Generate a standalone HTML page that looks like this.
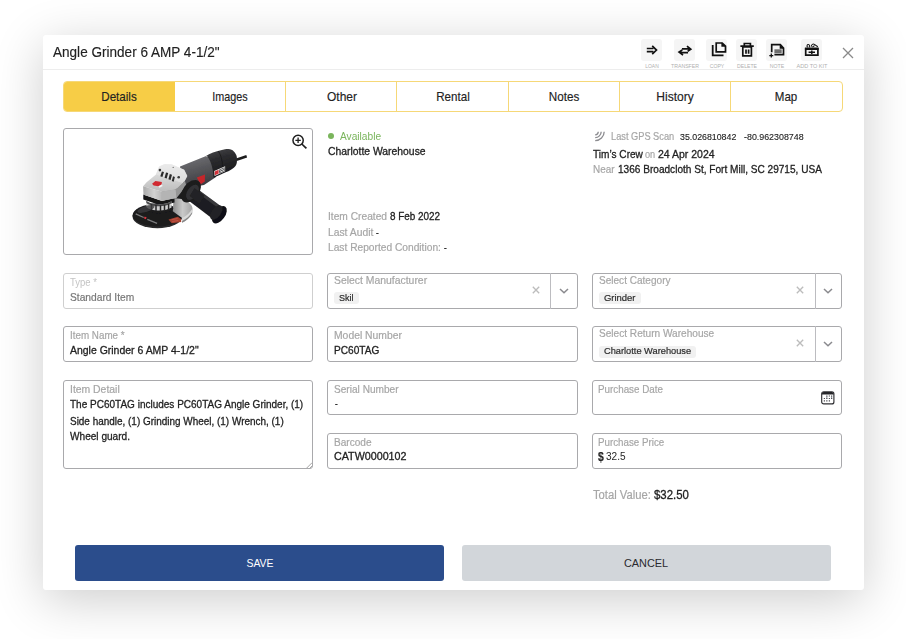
<!DOCTYPE html>
<html lang="en"><head><meta charset="utf-8"><title>Angle Grinder 6 AMP 4-1/2"</title>
<style>
html,body{margin:0;padding:0;}
body{width:906px;height:639px;background:#fff;position:relative;overflow:hidden;font-family:"Liberation Sans",sans-serif;}
.abs,.t,.box,.chip,.ib{position:absolute;box-sizing:border-box;}
.t{white-space:nowrap;line-height:1;}
#modal{left:42.700px;top:35.200px;width:821.300px;height:554.800px;background:#fff;border-radius:3px;box-shadow:0 10px 50px rgba(0,0,0,.2);}
#hline{left:43px;top:68.500px;width:821px;height:1.600px;background:#ededed;}
.ib{width:21px;height:21.5px;top:39px;background:#f5f5f5;border-radius:3px;}
.ib svg{position:absolute;left:0;top:0;}
#tabs{left:63.300px;top:80.700px;width:779.700px;height:31px;border:1px solid #f6d877;border-radius:4px;background:#fff;overflow:hidden;}
.tdiv{top:81px;width:1px;height:30px;background:#f6d877;}
#tabact{left:-1px;top:-1px;width:111.500px;height:31px;background:#f7cd46;}
.box{border:1px solid #a9a9ac;border-radius:3px;background:#fff;}
.box.dis{border-color:#cfcfcf;}
.vdiv{width:1.200px;background:#bcbcc0;}
.chip{height:12px;background:#f1f1f1;border-radius:3px;}
.btn{border-radius:3px;height:36px;top:545px;}

</style></head>
<body>
<div id="modal" class="abs"></div>
<div id="hline" class="abs"></div>

<!-- toolbar -->
<div class="ib" style="left:641px"><svg width="22" height="22" viewBox="0 0 22 22"><path d="M5.800 9.500h6.600M5.800 12.600h6.600M11.200 6.900l4.300 4.150-4.300 4.150" fill="none" stroke="#111" stroke-width="1.700"/></svg></div>
<div class="ib" style="left:674px"><svg width="22" height="22" viewBox="0 0 22 22"><g transform="translate(11 11.600) scale(.9) translate(-11 -11.600)"><path d="M7.600 9.700h8.200M13.200 6.700l4.200 3.400-3.400 2.200M14.400 13.900H6.200M8.800 16.600l-4.400-3.300 3.600-2.400" fill="none" stroke="#111" stroke-width="1.900" stroke-linejoin="miter"/></g></svg></div>
<div class="ib" style="left:706px"><svg width="22" height="22" viewBox="0 0 22 22"><path d="M10.200 4h6l3.300 3.200v5.600h-9.300z" fill="none" stroke="#111" stroke-width="1.700"/><path d="M15.400 3.600v4.200h4.400z" fill="#111"/><path d="M6.700 6v10.300h10.800" fill="none" stroke="#111" stroke-width="1.800"/></svg></div>
<div class="ib" style="left:736px"><svg width="22" height="22" viewBox="0 0 22 22"><path d="M4.400 7.200h13.400M8.300 6.800V4.500h6.100v2.300" fill="none" stroke="#111" stroke-width="1.700"/><path d="M6.800 8h8.600v8.800H6.800z" fill="none" stroke="#111" stroke-width="1.700"/><path d="M10 10.400v4.400M12.600 10.400v4.400" stroke="#111" stroke-width="1.700"/></svg></div>
<div class="ib" style="left:766px"><svg width="22" height="22" viewBox="0 0 22 22"><path d="M5.700 13.200V5.600h8.600l3.200 3.500v6.600H8.400" fill="none" stroke="#111" stroke-width="1.700"/><path d="M13.700 5.600v4.100h3.900z" fill="#111"/><rect x="8.400" y="10.300" width="7.300" height="3.900" fill="#6e6e6e"/><path d="M5.300 14.600v4M3.300 16.600h4" stroke="#111" stroke-width="1.300"/></svg></div>
<div class="ib" style="left:801px"><svg width="22" height="22" viewBox="0 0 22 22"><path d="M4.700 10.200h12.200v6H4.700z" fill="none" stroke="#111" stroke-width="1.700"/><path d="M3.900 9.600h13.800" stroke="#111" stroke-width="2.200"/><path d="M7.600 13.300h6.400M10.800 11.500v3.600" stroke="#111" stroke-width="1.500"/><path d="M6.600 8.400c-1.500-1.800 0-3.800 1.600-2.600.8.600.4 1.800-.2 2.600M10.200 7.800c0-2.400 2-3.200 3.200-2.400l3.400 2.400M11.400 8l2.200-1.400" fill="none" stroke="#111" stroke-width="1.050"/></svg></div>
<svg class="abs" style="left:842px;top:47px" width="12" height="12" viewBox="0 0 12 12"><path d="M1 1l10 10M11 1L1 11" stroke="#8a8a8a" stroke-width="1.300" fill="none"/></svg>

<!-- tabs -->
<div id="tabs" class="abs"><div id="tabact" class="abs"></div></div>
<div class="abs tdiv" style="left:284.7px"></div><div class="abs tdiv" style="left:396.3px"></div><div class="abs tdiv" style="left:507.6px"></div><div class="abs tdiv" style="left:619.1px"></div><div class="abs tdiv" style="left:730.0px"></div>

<!-- image box -->
<div class="box" style="left:63.300px;top:128px;width:249.600px;height:127px"></div>
<svg class="abs" style="left:291px;top:134px" width="17" height="17" viewBox="0 0 17 17"><circle cx="7.100" cy="6.300" r="5.150" fill="none" stroke="#1e1e1e" stroke-width="1.500"/><path d="M10.800 10l4.600 4.400" stroke="#1e1e1e" stroke-width="1.700"/><path d="M4.400 6.300h5.400M7.100 3.600v5.400" stroke="#1e1e1e" stroke-width="1.300"/></svg>
<!--GRINDER_START-->
<svg class="abs" style="left:120px;top:140px" width="140" height="95" viewBox="120 140 140 95">
<defs>
<linearGradient id="gb" x1="0" y1="0" x2="0.3" y2="1"><stop offset="0" stop-color="#77777b"/><stop offset=".45" stop-color="#5a5a5e"/><stop offset="1" stop-color="#3c3c40"/></linearGradient>
<linearGradient id="gd" x1="0" y1="0" x2="0.3" y2="1"><stop offset="0" stop-color="#4a4a4d"/><stop offset=".4" stop-color="#2c2c2f"/><stop offset="1" stop-color="#19191b"/></linearGradient>
<linearGradient id="gh" x1="0" y1="0" x2="0" y2="1"><stop offset="0" stop-color="#ececec"/><stop offset="1" stop-color="#bdbdbd"/></linearGradient>
<linearGradient id="gf" x1="0" y1="0" x2="1" y2="0"><stop offset="0" stop-color="#a9a9a9"/><stop offset=".6" stop-color="#d2d2d2"/><stop offset="1" stop-color="#b9b9b9"/></linearGradient>
<linearGradient id="gg" x1="0" y1="0" x2="1" y2="0"><stop offset="0" stop-color="#8c8c8c"/><stop offset=".5" stop-color="#c9c9c9"/><stop offset="1" stop-color="#a3a3a3"/></linearGradient>
<filter id="bl" x="-5%" y="-5%" width="110%" height="110%"><feGaussianBlur stdDeviation=".35"/></filter>
</defs>
<g filter="url(#bl)">
<!-- cord -->
<path d="M234 160.500C239 159 243 157.600 246.700 156.300" fill="none" stroke="#1d1d1f" stroke-width="2.600"/>
<!-- disc -->
<ellipse cx="157.400" cy="216.400" rx="24.900" ry="11.800" fill="#2a2a2c"/>
<ellipse cx="157.400" cy="215.200" rx="24.800" ry="11.200" fill="#1b1b1d"/>
<!-- guard -->
<path d="M174 190l12.500-6 3 16.500-15 -1.500z" fill="#1c1c1e"/>
<path d="M173.600 198l12 1.500 4.200 4c1.800 1.600 2.700 3.400 2.700 5.400l-.4 4.600c-2 4-5.500 7-10 9.300v-4.700l-9.300-6.900z" fill="url(#gg)"/>
<path d="M182.100 218.100c4.500-2.300 8.200-5.600 10.300-9.600l-.3 5c-2 4-5.500 7-10 9.300z" fill="#d9d9d9"/>
<path d="M182.100 221c4.300-2.200 7.800-5.200 10-8.800l0 1.300c-2 4-5.500 7-10 9.300z" fill="#868686"/>
<!-- flange / nut -->
<path d="M143.300 194.500l18.700 6.400 12.500-2.800v4.400l-12.500 3.300-18.700-6.300z" fill="#151517"/>
<ellipse cx="159.300" cy="208.300" rx="13.800" ry="5.200" fill="#1a1a1c"/>
<path d="M146.300 200.500c3 4 19 5.400 25.200 .8v6.300c-6.200 4.600-22.200 3.400-25.200-.6z" fill="#cfcfcf"/>
<path d="M146.300 200.500c3 4 19 5.400 25.200 .8v2c-6.200 4.600-22.200 3.400-25.200-.6z" fill="#4a4a4c"/>
<path d="M151.500 204.200v6M156 205v6.300M160.500 205.200v6.300M164.500 205v6.200M168.600 204v6" stroke="#262628" stroke-width="1.500"/>
<!-- body grey -->
<path d="M180 166.500l25.500-10.300 7.500 2 3 18.800-12 8-20 3.500z" fill="url(#gb)"/>
<!-- body dark rear -->
<path d="M205.200 156.400C210 153.500 216 151 220.800 150.200c3-.6 5.500-1.200 7.500-1.200 2.500.1 4.200.9 5.300 2.200 1.700 1.800 2.900 3.500 3.200 5.500.3 2.300.3 4.300 0 6-.4 2-1.300 3.500-2.700 4.700-2 1.800-5 3.400-7.800 4.700-3.500 1.700-8.500 3.800-12.700 5.600-.3-3.800-.6-7.500-1.600-11-1-4-2.500-7.500-5-10.600z" fill="url(#gd)"/>
<path d="M218.300 151c2.200 3.500 3.300 7 3.900 11 .5 3.300.5 6.600.2 10" fill="none" stroke="#111113" stroke-width=".9" opacity=".7"/>
<!-- logo -->
<path d="M214.200 170.900l10.900-4.700v5.100l-10.500 4.700z" fill="#f2f2f2"/>
<path d="M214.700 171.500l3.900-1.700.1 3.800-3.800 1.700z" fill="#d2323a"/>
<path d="M219.100 169.700l5.500-2.400v3.700l-5.400 2.400z" fill="#2a2a2c"/>
<path d="M219.600 170.600l4.600-2M219.600 172.300l4.600-2" stroke="#f2f2f2" stroke-width=".9"/>
<!-- red label -->
<path d="M196.800 177.500l8.200-3-.2 7-4.300 3z" fill="#c4262c"/>
<!-- head -->
<path d="M143.100 186.200l3.500-3.900 9.400-7.900 3.100-7.800 5.500-2.700 7 .4 12.600 5.400 3.100 6.300-2.400 4.700-9.300 8.600-14.100 2.300z" fill="url(#gh)"/>
<path d="M143.100 186.200l18.400 5.400v9.200l-18-6z" fill="url(#gf)"/>
<path d="M161.500 191.600l14.100-2.300 9.300-8.600 1.500 5-9.800 12.200-15.100 2.900z" fill="#969696"/>
<path d="M161.500 191.600l14.100-2.300.8 8.600-14.900 2.900z" fill="#b4b4b4"/>
<path d="M156 174.400l3.100-7.800 5.500-2.700 7 .4 12.600 5.400 3.100 6.300-2.400 4.700-2.500 2.300z" fill="#e9e9e9" opacity=".55"/>
<!-- vents -->
<path d="M160.300 176.300l1.600-4.700 2.100.5-1.600 4.800zM164.500 177.700l1.500-5.200 2.200.6-1.500 5.300zM168.400 179.300l1.400-5.200 2.200.7-1.400 5.200zM171.800 181l1.200-4.700 1.900.7-1.200 4.700z" fill="#2b2b2b"/>
<circle cx="159.900" cy="170.100" r="1.300" fill="#3a3a3a"/><circle cx="178.700" cy="177.200" r="1.300" fill="#3a3a3a"/><circle cx="173.200" cy="167.400" r=".7" fill="#777"/>
<!-- red button -->
<path d="M152.100 183.700l3.300-2.800 6.500 1 -.3 2.600-3.300 1.800-4.700-.8z" fill="#d12a31"/>
<path d="M158.300 186.400l3.500-1.800.8 1.400-3 1.700z" fill="#f4f4f4"/>
<!-- handle -->
<path d="M194 186.400l27.500 20.400-8 12.700-27-20.500z" fill="#1e1e20"/>
<path d="M199 192l19 14" stroke="#48484c" stroke-width="3" fill="none" opacity=".6"/>
<ellipse cx="191" cy="191.200" rx="8" ry="12.700" transform="rotate(36.500 191 191.200)" fill="#1d1d1f"/>
<ellipse cx="192.500" cy="192.300" rx="5" ry="8.500" transform="rotate(36.500 192.500 192.300)" fill="#333336"/>
<path d="M194.500 188l10 7.500-5 8-10-7.500z" fill="#232325"/>
<ellipse cx="219.400" cy="214.800" rx="5.500" ry="10" transform="rotate(36.500 219.400 214.800)" fill="#111113"/>
<ellipse cx="216.300" cy="212.500" rx="4.500" ry="8.300" transform="rotate(36.500 216.300 212.500)" fill="#222225"/>
<!-- disc labels -->
<path d="M168.500 219.400l9.300-2.600 3.300 2.300.1 3-9.500 1.200z" fill="#a5402f"/>
<path d="M171.500 219.800l6-1.300M172.300 221.500l6-1" stroke="#c8584a" stroke-width=".8"/>
<path d="M135.700 213.800l8 3.700" stroke="#7d7d7d" stroke-width="1.300"/>
<path d="M144.300 217.400l1.900 1" stroke="#d8373d" stroke-width="2.200"/>
<path d="M147.300 219.400l9.800 4" stroke="#7d7d7d" stroke-width="1.300"/>
<ellipse cx="146" cy="209" rx="9" ry="3" transform="rotate(-18 146 209)" fill="#3c3c3f" opacity=".8"/>
</g>
</svg>
<!--GRINDER_END-->

<!-- status dot + gps icon -->
<div class="abs" style="left:328.400px;top:133.300px;width:6px;height:6px;border-radius:50%;background:#7ab55c"></div>
<svg class="abs" style="left:594px;top:130px" width="12" height="12" viewBox="0 0 12 12"><path d="M4.300 1.700A3.300 3.300 0 0 1 1.200 4.800M7.200 1.700A6.200 6.200 0 0 1 1.200 7.700M10.200 1.700A9.200 9.200 0 0 1 1.200 10.700" fill="none" stroke="#8c8c90" stroke-width="1.300"/></svg>

<!-- fields col 1 -->
<div class="box dis" style="left:63.300px;top:273.3px;width:249.600px;height:35.800px"></div>
<div class="box" style="left:63.300px;top:326.4px;width:249.600px;height:35.800px"></div>
<div class="box" style="left:63.300px;top:379.600px;width:249.600px;height:89.500px"></div>
<svg class="abs" style="left:305.600px;top:462px" width="6.500" height="6.500" viewBox="0 0 8 8"><path d="M7.500 .8L.8 7.500M7.500 4.800L4.800 7.500" stroke="#9a9a9a" stroke-width="1.100" fill="none"/></svg>

<!-- fields col 2 -->
<div class="box" style="left:327.300px;top:273.3px;width:250.300px;height:35.800px"></div>
<div class="abs vdiv" style="left:550.300px;top:273.3px;height:35.800px"></div>
<div class="chip" style="left:334px;top:292.400px;width:25px"></div>
<svg class="abs" style="left:532px;top:286px" width="8" height="8" viewBox="0 0 8 8"><path d="M.8.8l6.400 6.400M7.200.8L.8 7.200" stroke="#bcbcbc" stroke-width="1.350" fill="none"/></svg>
<svg class="abs" style="left:559px;top:288px" width="10" height="6" viewBox="0 0 10 6"><path d="M1 1l4 3.800L9 1" stroke="#8a8a8e" stroke-width="1.500" fill="none"/></svg>
<div class="box" style="left:327.300px;top:326.4px;width:250.300px;height:35.800px"></div>
<div class="box" style="left:327.300px;top:379.6px;width:250.300px;height:35.800px"></div>
<div class="box" style="left:327.300px;top:432.8px;width:250.300px;height:35.800px"></div>

<!-- fields col 3 -->
<div class="box" style="left:592.200px;top:273.3px;width:250.300px;height:35.800px"></div>
<div class="abs vdiv" style="left:814.500px;top:273.3px;height:35.800px"></div>
<div class="chip" style="left:599px;top:292.400px;width:41.500px"></div>
<svg class="abs" style="left:795.900px;top:286px" width="8" height="8" viewBox="0 0 8 8"><path d="M.8.8l6.400 6.400M7.200.8L.8 7.200" stroke="#bcbcbc" stroke-width="1.350" fill="none"/></svg>
<svg class="abs" style="left:822.900px;top:288px" width="10" height="6" viewBox="0 0 10 6"><path d="M1 1l4 3.800L9 1" stroke="#8a8a8e" stroke-width="1.500" fill="none"/></svg>
<div class="box" style="left:592.200px;top:326.4px;width:250.300px;height:35.800px"></div>
<div class="abs vdiv" style="left:814.500px;top:326.4px;height:35.800px"></div>
<div class="chip" style="left:599px;top:345.700px;width:97px"></div>
<svg class="abs" style="left:795.900px;top:339px" width="8" height="8" viewBox="0 0 8 8"><path d="M.8.8l6.400 6.400M7.200.8L.8 7.200" stroke="#bcbcbc" stroke-width="1.350" fill="none"/></svg>
<svg class="abs" style="left:822.900px;top:341px" width="10" height="6" viewBox="0 0 10 6"><path d="M1 1l4 3.800L9 1" stroke="#8a8a8e" stroke-width="1.500" fill="none"/></svg>
<div class="box" style="left:592.200px;top:379.6px;width:250.300px;height:35.800px"></div>
<svg class="abs" style="left:821px;top:390.800px" width="14" height="14" viewBox="0 0 14 14"><rect x=".7" y=".7" width="12.200" height="12.200" rx="2" fill="#fff" stroke="#2e2e32" stroke-width="1.150"/><path d="M.9 2.700Q.9.900 2.700.900H10.900Q12.700.900 12.700 2.700V3.400H.9z" fill="#242428"/><path d="M5.300 5h1.100M7.800 5h1.100M10.100 5h1.100M2.800 7.500h1.100M5.300 7.500h1.100M7.800 7.500h1.100M10.100 7.500h1.100M2.800 9.900h1.100M5.300 9.900h1.100M7.800 9.900h1.100" stroke="#3a3a40" stroke-width="1.100"/><path d="M5.850 5v2.500M10.650 5v2.500" stroke="#555a66" stroke-width=".7"/></svg>
<div class="box" style="left:592.200px;top:432.8px;width:250.300px;height:35.800px"></div>

<!-- buttons -->
<div class="abs btn" style="left:75px;width:369px;background:#2b4d8c"></div>
<div class="abs btn" style="left:461.500px;width:369.500px;background:#d2d6da"></div>

<span class="t" id="t0" style="left:53.4px;top:44.14px;font-size:15px;color:#222;font-weight:400;-webkit-text-stroke:.15px #222;transform-origin:0 0;transform:scaleX(0.9038);">Angle Grinder 6 AMP 4-1/2&quot;</span>
<span class="t" id="t1" style="left:652px;top:63.85px;font-size:5.6px;color:#b0b0b0;font-weight:400;transform:translateX(-50%) scaleX(0.8862);">LOAN</span>
<span class="t" id="t2" style="left:684.5px;top:63.85px;font-size:5.6px;color:#b0b0b0;font-weight:400;transform:translateX(-50%) scaleX(0.9285);">TRANSFER</span>
<span class="t" id="t3" style="left:717px;top:63.85px;font-size:5.6px;color:#b0b0b0;font-weight:400;transform:translateX(-50%) scaleX(0.9143);">COPY</span>
<span class="t" id="t4" style="left:747px;top:63.85px;font-size:5.6px;color:#b0b0b0;font-weight:400;transform:translateX(-50%) scaleX(0.9189);">DELETE</span>
<span class="t" id="t5" style="left:777px;top:63.85px;font-size:5.6px;color:#b0b0b0;font-weight:400;transform:translateX(-50%) scaleX(0.9327);">NOTE</span>
<span class="t" id="t6" style="left:811.5px;top:63.85px;font-size:5.6px;color:#b0b0b0;font-weight:400;transform:translateX(-50%) scaleX(0.9940);">ADD TO KIT</span>
<span class="t" id="t7" style="left:119.2px;top:90.10px;font-size:13px;color:#222;font-weight:400;-webkit-text-stroke:.15px #222;transform:translateX(-50%) scaleX(0.8931);">Details</span>
<span class="t" id="t8" style="left:230.4px;top:90.10px;font-size:13px;color:#222;font-weight:400;-webkit-text-stroke:.15px #222;transform:translateX(-50%) scaleX(0.8302);">Images</span>
<span class="t" id="t9" style="left:341.6px;top:90.10px;font-size:13px;color:#222;font-weight:400;-webkit-text-stroke:.15px #222;transform:translateX(-50%) scaleX(0.9226);">Other</span>
<span class="t" id="t10" style="left:452.8px;top:90.10px;font-size:13px;color:#222;font-weight:400;-webkit-text-stroke:.15px #222;transform:translateX(-50%) scaleX(0.8915);">Rental</span>
<span class="t" id="t11" style="left:564.0px;top:90.10px;font-size:13px;color:#222;font-weight:400;-webkit-text-stroke:.15px #222;transform:translateX(-50%) scaleX(0.8979);">Notes</span>
<span class="t" id="t12" style="left:675.2px;top:90.10px;font-size:13px;color:#222;font-weight:400;-webkit-text-stroke:.15px #222;transform:translateX(-50%) scaleX(0.9270);">History</span>
<span class="t" id="t13" style="left:786.4000000000001px;top:90.10px;font-size:13px;color:#222;font-weight:400;-webkit-text-stroke:.15px #222;transform:translateX(-50%) scaleX(0.8894);">Map</span>
<span class="t" id="t14" style="left:339.5px;top:130.96px;font-size:11px;color:#7ab55c;font-weight:400;transform-origin:0 0;transform:scaleX(0.9246);">Available</span>
<span class="t" id="t15" style="left:328px;top:145.96px;font-size:11px;color:#222;font-weight:400;-webkit-text-stroke:.3px #222;transform-origin:0 0;transform:scaleX(0.9426);">Charlotte Warehouse</span>
<span class="t" id="t16" style="left:328px;top:210.96px;font-size:11px;color:#a6a6a6;font-weight:400;-webkit-text-stroke:.2px #a6a6a6;transform-origin:0 0;transform:scaleX(0.9278);">Item Created</span>
<span class="t" id="t17" style="left:389.9px;top:210.96px;font-size:11px;color:#222;font-weight:400;-webkit-text-stroke:.3px #222;transform-origin:0 0;transform:scaleX(0.9002);">8 Feb 2022</span>
<span class="t" id="t18" style="left:328px;top:226.56px;font-size:11px;color:#a6a6a6;font-weight:400;-webkit-text-stroke:.2px #a6a6a6;transform-origin:0 0;transform:scaleX(0.9373);">Last Audit</span>
<span class="t" id="t19" style="left:376.3px;top:226.56px;font-size:11px;color:#222;font-weight:400;-webkit-text-stroke:.3px #222;transform-origin:0 0;transform:scaleX(0.7353);">-</span>
<span class="t" id="t20" style="left:328px;top:241.96px;font-size:11px;color:#a6a6a6;font-weight:400;-webkit-text-stroke:.2px #a6a6a6;transform-origin:0 0;transform:scaleX(0.9278);">Last Reported Condition:</span>
<span class="t" id="t21" style="left:443.8px;top:241.96px;font-size:11px;color:#222;font-weight:400;-webkit-text-stroke:.3px #222;transform-origin:0 0;transform:scaleX(0.7353);">-</span>
<span class="t" id="t22" style="left:610.7px;top:130.76px;font-size:11px;color:#a6a6a6;font-weight:400;-webkit-text-stroke:.2px #a6a6a6;transform-origin:0 0;transform:scaleX(0.8402);">Last GPS Scan</span>
<span class="t" id="t23" style="left:680.2px;top:132.01px;font-size:9.5px;color:#222;font-weight:400;-webkit-text-stroke:.12px #222;transform-origin:0 0;transform:scaleX(0.9265);">35.026810842</span>
<span class="t" id="t24" style="left:743.7px;top:132.01px;font-size:9.5px;color:#222;font-weight:400;-webkit-text-stroke:.12px #222;transform-origin:0 0;transform:scaleX(0.9324);">-80.962308748</span>
<span class="t" id="t25" style="left:592.5px;top:148.66px;font-size:11px;color:#222;font-weight:400;-webkit-text-stroke:.3px #222;transform-origin:0 0;transform:scaleX(0.9174);">Tim’s Crew</span>
<span class="t" id="t26" style="left:645.2px;top:148.66px;font-size:11px;color:#a6a6a6;font-weight:400;-webkit-text-stroke:.2px #a6a6a6;transform-origin:0 0;transform:scaleX(0.8327);">on</span>
<span class="t" id="t27" style="left:658.1px;top:148.66px;font-size:11px;color:#222;font-weight:400;-webkit-text-stroke:.3px #222;transform-origin:0 0;transform:scaleX(0.9538);">24 Apr 2024</span>
<span class="t" id="t28" style="left:592.5px;top:163.86px;font-size:11px;color:#a6a6a6;font-weight:400;-webkit-text-stroke:.2px #a6a6a6;transform-origin:0 0;transform:scaleX(0.9017);">Near</span>
<span class="t" id="t29" style="left:617.6px;top:163.86px;font-size:11px;color:#222;font-weight:400;-webkit-text-stroke:.3px #222;transform-origin:0 0;transform:scaleX(0.9161);">1366 Broadcloth St, Fort Mill, SC 29715, USA</span>
<span class="t" id="t30" style="left:69.8px;top:277.16px;font-size:11px;color:#c4c4c4;font-weight:400;transform-origin:0 0;transform:scaleX(0.8657);">Type *</span>
<span class="t" id="t31" style="left:69.8px;top:292.06px;font-size:11px;color:#777;font-weight:400;-webkit-text-stroke:.2px #777;transform-origin:0 0;transform:scaleX(0.9292);">Standard Item</span>
<span class="t" id="t32" style="left:69.6px;top:329.86px;font-size:11px;color:#a6a6a6;font-weight:400;-webkit-text-stroke:.2px #a6a6a6;transform-origin:0 0;transform:scaleX(0.8930);">Item Name *</span>
<span class="t" id="t33" style="left:69.6px;top:344.86px;font-size:11px;color:#222;font-weight:400;-webkit-text-stroke:.3px #222;transform-origin:0 0;transform:scaleX(0.9514);">Angle Grinder 6 AMP 4-1/2&quot;</span>
<span class="t" id="t34" style="left:69.8px;top:383.56px;font-size:11px;color:#a6a6a6;font-weight:400;-webkit-text-stroke:.2px #a6a6a6;transform-origin:0 0;transform:scaleX(0.9453);">Item Detail</span>
<span class="t" id="t35" style="left:70px;top:399.46px;font-size:11px;color:#222;font-weight:400;-webkit-text-stroke:.3px #222;transform-origin:0 0;transform:scaleX(0.9096);">The PC60TAG includes PC60TAG Angle Grinder, (1)</span>
<span class="t" id="t36" style="left:70px;top:415.56px;font-size:11px;color:#222;font-weight:400;-webkit-text-stroke:.3px #222;transform-origin:0 0;transform:scaleX(0.9040);">Side handle, (1) Grinding Wheel, (1) Wrench, (1)</span>
<span class="t" id="t37" style="left:70px;top:431.36px;font-size:11px;color:#222;font-weight:400;-webkit-text-stroke:.3px #222;transform-origin:0 0;transform:scaleX(0.9169);">Wheel guard.</span>
<span class="t" id="t38" style="left:333.8px;top:274.86px;font-size:11px;color:#a6a6a6;font-weight:400;-webkit-text-stroke:.2px #a6a6a6;transform-origin:0 0;transform:scaleX(0.9458);">Select Manufacturer</span>
<span class="t" id="t39" style="left:339.1px;top:294.46px;font-size:9.2px;color:#2c2c2c;font-weight:400;-webkit-text-stroke:.2px #2c2c2c;transform-origin:0 0;transform:scaleX(0.9857);">Skil</span>
<span class="t" id="t40" style="left:333.8px;top:330.16px;font-size:11px;color:#a6a6a6;font-weight:400;-webkit-text-stroke:.2px #a6a6a6;transform-origin:0 0;transform:scaleX(0.9412);">Model Number</span>
<span class="t" id="t41" style="left:334.2px;top:344.56px;font-size:11px;color:#222;font-weight:400;-webkit-text-stroke:.3px #222;transform-origin:0 0;transform:scaleX(0.9186);">PC60TAG</span>
<span class="t" id="t42" style="left:333.8px;top:383.66px;font-size:11px;color:#a6a6a6;font-weight:400;-webkit-text-stroke:.2px #a6a6a6;transform-origin:0 0;transform:scaleX(0.9188);">Serial Number</span>
<span class="t" id="t43" style="left:334.8px;top:397.66px;font-size:11px;color:#222;font-weight:400;-webkit-text-stroke:.3px #222;transform-origin:0 0;transform:scaleX(0.7353);">-</span>
<span class="t" id="t44" style="left:333.8px;top:436.56px;font-size:11px;color:#a6a6a6;font-weight:400;-webkit-text-stroke:.2px #a6a6a6;transform-origin:0 0;transform:scaleX(0.9150);">Barcode</span>
<span class="t" id="t45" style="left:334.2px;top:451.36px;font-size:11px;color:#222;font-weight:400;-webkit-text-stroke:.3px #222;transform-origin:0 0;transform:scaleX(0.9746);">CATW0000102</span>
<span class="t" id="t46" style="left:598.5px;top:274.86px;font-size:11px;color:#a6a6a6;font-weight:400;-webkit-text-stroke:.2px #a6a6a6;transform-origin:0 0;transform:scaleX(0.9136);">Select Category</span>
<span class="t" id="t47" style="left:603.8px;top:294.46px;font-size:9.2px;color:#2c2c2c;font-weight:400;-webkit-text-stroke:.2px #2c2c2c;transform-origin:0 0;transform:scaleX(1.0280);">Grinder</span>
<span class="t" id="t48" style="left:598.5px;top:327.86px;font-size:11px;color:#a6a6a6;font-weight:400;-webkit-text-stroke:.2px #a6a6a6;transform-origin:0 0;transform:scaleX(0.9176);">Select Return Warehouse</span>
<span class="t" id="t49" style="left:603.8px;top:347.36px;font-size:9.2px;color:#2c2c2c;font-weight:400;-webkit-text-stroke:.2px #2c2c2c;transform-origin:0 0;transform:scaleX(1.0071);">Charlotte Warehouse</span>
<span class="t" id="t50" style="left:598.1px;top:383.66px;font-size:11px;color:#a6a6a6;font-weight:400;-webkit-text-stroke:.2px #a6a6a6;transform-origin:0 0;transform:scaleX(0.8919);">Purchase Date</span>
<span class="t" id="t51" style="left:598.1px;top:436.86px;font-size:11px;color:#a6a6a6;font-weight:400;-webkit-text-stroke:.2px #a6a6a6;transform-origin:0 0;transform:scaleX(0.8875);">Purchase Price</span>
<span class="t" id="t52" style="left:598.1px;top:450.20px;font-size:13px;color:#222;font-weight:700;-webkit-text-stroke:.15px #222;transform-origin:0 0;transform:scaleX(0.8017);">$</span>
<span class="t" id="t53" style="left:606.1px;top:451.36px;font-size:11px;color:#262626;font-weight:400;transform-origin:0 0;transform:scaleX(0.9150);">32.5</span>
<span class="t" id="t54" style="left:592.6px;top:488.53px;font-size:12px;color:#a6a6a6;font-weight:400;-webkit-text-stroke:.2px #a6a6a6;transform-origin:0 0;transform:scaleX(0.9365);">Total Value:</span>
<span class="t" id="t55" style="left:653.8px;top:488.53px;font-size:12px;color:#222;font-weight:400;-webkit-text-stroke:.3px #222;transform-origin:0 0;transform:scaleX(0.9481);">$32.50</span>
<span class="t" id="t56" style="left:259.5px;top:558.15px;font-size:11.5px;color:#fff;font-weight:400;transform:translateX(-50%) scaleX(0.9085);">SAVE</span>
<span class="t" id="t57" style="left:645.9px;top:558.05px;font-size:11.5px;color:#2a2a2e;font-weight:400;transform:translateX(-50%) scaleX(0.9474);">CANCEL</span>
</body></html>
